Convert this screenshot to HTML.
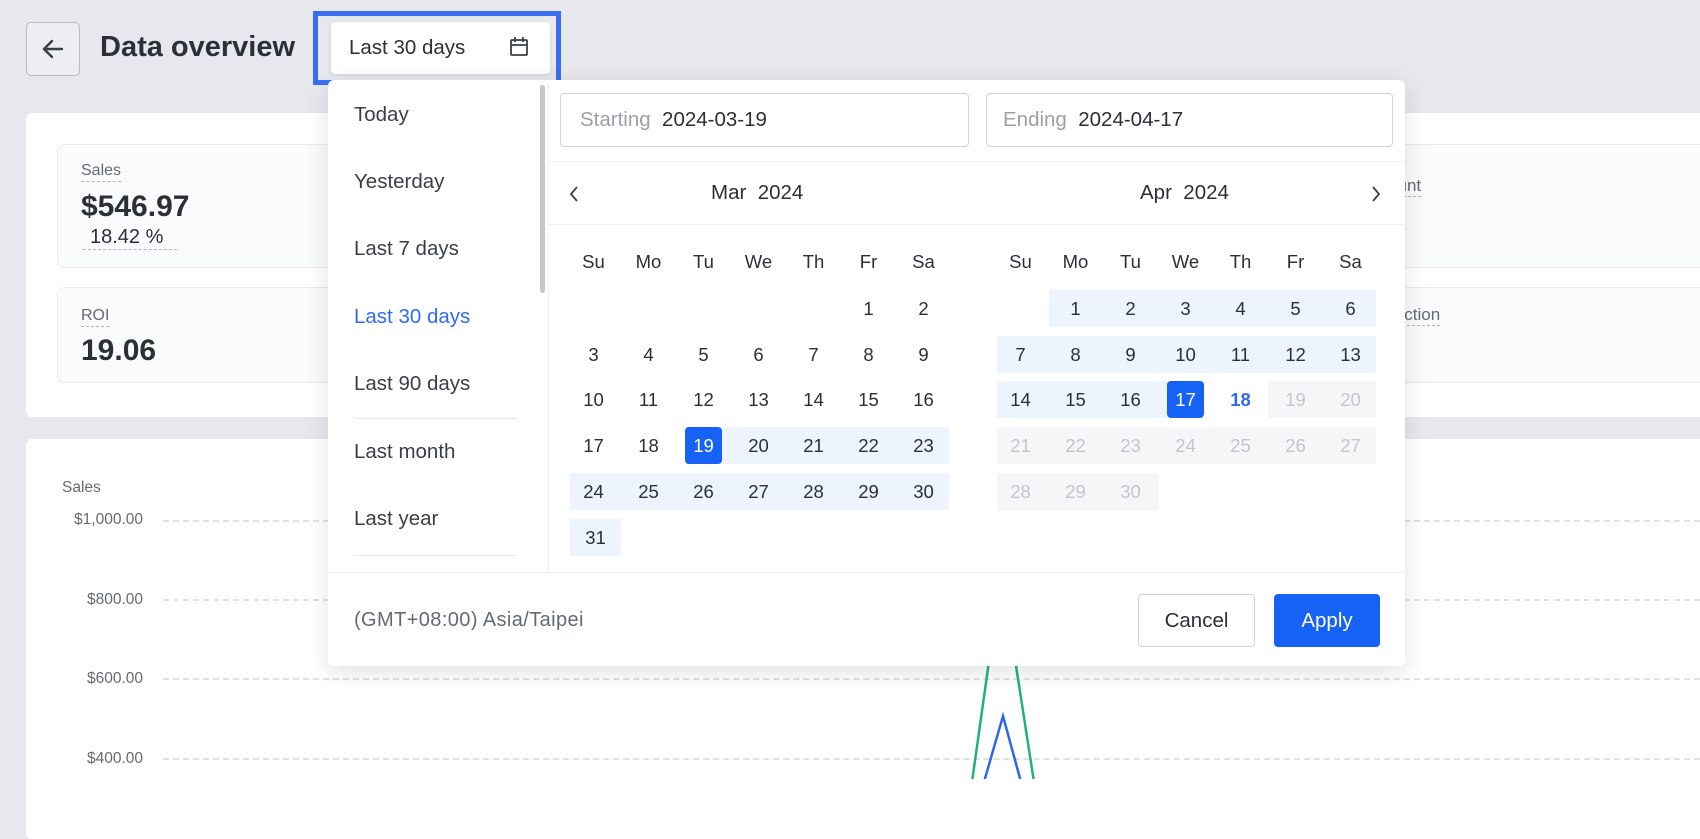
<!DOCTYPE html>
<html><head><meta charset="utf-8"><style>
*{box-sizing:border-box;margin:0;padding:0}
body{width:1700px;height:779px;overflow:hidden;background:#e6e8ed;font-family:"Liberation Sans",sans-serif;color:#2b2f36;position:relative}
.a{position:absolute}
.card{background:#fff;border-radius:6px}
.mc{background:#fafbfc;border:1px solid #e8eaee;border-radius:8px}
.lbl{font-size:16px;color:#646a73;border-bottom:1px dashed #b0b5bd;line-height:20px}
.row{position:absolute;display:flex;height:37px}
.row span{width:55px;text-align:center;line-height:37px;font-size:18.5px;color:#2b2f36}
.bg{background:#edf4fe}
.dis{background:#f5f6f8}
.dis span,.row span.d{color:#c2c6cc}
.sel{background:#1662f5;color:#fff!important;border-radius:4px;width:37px!important;margin:0 9px}
.li{position:absolute;left:354px;font-size:20.5px;color:#3a3f47}
.yl{position:absolute;right:1557px;font-size:15.5px;color:#646a73;text-align:right;white-space:nowrap}
.gl{position:absolute;left:163px;right:0;border-top:2px dashed #dfe1e5}
</style></head><body>
<div class="a" style="left:26px;top:22px;width:54px;height:54px;border:1px solid #b8bcc4;border-radius:5px;background:#eceef2"></div>
<svg class="a" style="left:40px;top:36px" width="26" height="26" viewBox="0 0 26 26"><path d="M22 13H5M12 5l-8 8 8 8" stroke="#3a3f47" stroke-width="2.4" fill="none" stroke-linecap="round" stroke-linejoin="round"/></svg>
<div class="a" style="left:100px;top:31px;font-size:29px;font-weight:bold;color:#2b2f36">Data overview</div>
<div class="a" style="left:313px;top:11px;width:248px;height:74px;border:5px solid #3a6df0"></div>
<div class="a" style="left:331px;top:22px;width:219px;height:52px;background:#fff;border-radius:4px;box-shadow:0 1px 3px rgba(0,0,0,.1)"></div>
<div class="a" style="left:349px;top:36px;font-size:20.5px;color:#2b2f36">Last 30 days</div>
<svg class="a" style="left:509px;top:36px" width="20" height="22" viewBox="0 0 20 22"><rect x="2" y="4" width="16" height="15" rx="1" stroke="#3a3f47" stroke-width="1.8" fill="none"/><path d="M2 9h16M6 1v5M14 1v5" stroke="#3a3f47" stroke-width="1.8"/></svg>
<div class="a card" style="left:26px;top:113px;width:1700px;height:304px"></div>
<div class="a mc" style="left:57px;top:144px;width:400px;height:124px"></div>
<div class="a mc" style="left:57px;top:287px;width:400px;height:96px"></div>
<div class="a mc" style="left:1100px;top:144px;width:700px;height:124px"></div>
<div class="a mc" style="left:1100px;top:287px;width:700px;height:96px"></div>
<div class="a lbl" style="left:81px;top:161px">Sales</div>
<div class="a" style="left:81px;top:190px;font-size:30px;font-weight:bold">$546.97</div>
<div class="a" style="left:83px;top:225px;font-size:20px;border-bottom:1px dashed #b0b5bd;line-height:24px;padding:0 14px 0 7px">18.42 %</div>
<div class="a lbl" style="left:81px;top:306px">ROI</div>
<div class="a" style="left:81px;top:334px;font-size:30px;font-weight:bold">19.06</div>
<div class="a lbl" style="left:1355px;top:176px;font-size:17px">Discount</div>
<div class="a lbl" style="left:1352px;top:305px;font-size:17px">Transaction</div>
<div class="a card" style="left:26px;top:439px;width:1700px;height:400px"></div>
<div class="a" style="left:62px;top:479px;font-size:15.5px;color:#646a73">Sales</div>
<div class="yl" style="top:511px">$1,000.00</div><div class="gl" style="top:520px"></div>
<div class="yl" style="top:591px">$800.00</div><div class="gl" style="top:599px"></div>
<div class="yl" style="top:670px">$600.00</div><div class="gl" style="top:678px"></div>
<div class="yl" style="top:750px">$400.00</div><div class="gl" style="top:758px"></div>
<svg class="a" style="left:0;top:0" width="1700" height="779"><path d="M972 782L992 640M1034 782L1012 640" stroke="#22b07d" stroke-width="2.5" fill="none"/><path d="M984 782L1003 716L1021 782" stroke="#2f66f0" stroke-width="2.5" fill="none"/></svg>
<div class="a" style="left:328px;top:80px;width:1077px;height:586px;background:#fff;border-radius:6px;box-shadow:0 6px 24px rgba(0,0,0,.12)"></div>
<div class="a" style="left:328px;top:85px;width:220px;height:10px;background:#fff"></div>
<div class="a" style="left:548px;top:85px;width:1px;height:487px;background:#eef0f3"></div>
<div class="a" style="left:540px;top:85px;width:5px;height:208px;background:#c4c7cc;border-radius:3px"></div>
<div class="li" style="top:103px">Today</div>
<div class="li" style="top:170px">Yesterday</div>
<div class="li" style="top:237px">Last 7 days</div>
<div class="li" style="top:305px;color:#2f6bf2">Last 30 days</div>
<div class="li" style="top:372px">Last 90 days</div>
<div class="a" style="left:354px;top:418px;width:162px;height:1px;background:#e6e8eb"></div>
<div class="li" style="top:440px">Last month</div>
<div class="li" style="top:507px">Last year</div>
<div class="a" style="left:354px;top:555px;width:162px;height:1px;background:#e6e8eb"></div>
<div class="a" style="left:560px;top:93px;width:409px;height:54px;border:1px solid #d0d3d9;border-radius:4px"></div>
<div class="a" style="left:580px;top:108px;font-size:20.5px;color:#9aa0a8">Starting&nbsp; <span style="color:#2b2f36">2024-03-19</span></div>
<div class="a" style="left:986px;top:93px;width:407px;height:54px;border:1px solid #d0d3d9;border-radius:4px"></div>
<div class="a" style="left:1003px;top:108px;font-size:20.5px;color:#9aa0a8">Ending&nbsp; <span style="color:#2b2f36">2024-04-17</span></div>
<div class="a" style="left:548px;top:161px;width:857px;height:1px;background:#eef0f3"></div>
<div class="a" style="left:548px;top:224px;width:857px;height:1px;background:#eef0f3"></div>
<svg class="a" style="left:568px;top:185px" width="12" height="18"><path d="M9 2L3 9l6 7" stroke="#3a3f47" stroke-width="1.8" fill="none"/></svg>
<svg class="a" style="left:1370px;top:185px" width="12" height="18"><path d="M3 2l6 7-6 7" stroke="#3a3f47" stroke-width="1.8" fill="none"/></svg>
<div class="a" style="left:711px;top:181px;font-size:20.5px">Mar&nbsp; 2024</div>
<div class="a" style="left:1140px;top:181px;font-size:20.5px">Apr&nbsp; 2024</div>
<div class="row" style="left:566px;top:243px"><span>Su</span><span>Mo</span><span>Tu</span><span>We</span><span>Th</span><span>Fr</span><span>Sa</span></div>
<div class="row" style="left:993px;top:243px"><span>Su</span><span>Mo</span><span>Tu</span><span>We</span><span>Th</span><span>Fr</span><span>Sa</span></div>
<div class="row" style="left:566px;top:290px"><span></span><span></span><span></span><span></span><span></span><span>1</span><span>2</span></div>
<div class="row" style="left:566px;top:336px"><span>3</span><span>4</span><span>5</span><span>6</span><span>7</span><span>8</span><span>9</span></div>
<div class="row" style="left:566px;top:381px"><span>10</span><span>11</span><span>12</span><span>13</span><span>14</span><span>15</span><span>16</span></div>
<div class="a bg" style="left:685px;top:427px;width:264px;height:37px"></div>
<div class="row" style="left:566px;top:427px"><span>17</span><span>18</span><span class="sel">19</span><span>20</span><span>21</span><span>22</span><span>23</span></div>
<div class="a bg" style="left:570px;top:473px;width:379px;height:37px"></div>
<div class="row" style="left:566px;top:473px"><span>24</span><span>25</span><span>26</span><span>27</span><span>28</span><span>29</span><span>30</span></div>
<div class="row" style="left:566px;top:519px"><span class="bg" style="width:51px;margin-left:4px">31</span></div>
<div class="a bg" style="left:1049px;top:290px;width:327px;height:37px"></div>
<div class="row" style="left:993px;top:290px"><span></span><span>1</span><span>2</span><span>3</span><span>4</span><span>5</span><span>6</span></div>
<div class="a bg" style="left:997px;top:336px;width:379px;height:37px"></div>
<div class="row" style="left:993px;top:336px"><span>7</span><span>8</span><span>9</span><span>10</span><span>11</span><span>12</span><span>13</span></div>
<div class="a bg" style="left:997px;top:381px;width:171px;height:37px"></div>
<div class="a dis" style="left:1268px;top:381px;width:108px;height:37px"></div>
<div class="row" style="left:993px;top:381px"><span>14</span><span>15</span><span>16</span><span class="sel">17</span><span style="color:#2f6bf2;font-weight:bold">18</span><span class="d">19</span><span class="d">20</span></div>
<div class="a dis" style="left:997px;top:427px;width:379px;height:37px"></div>
<div class="row" style="left:993px;top:427px"><span class="d">21</span><span class="d">22</span><span class="d">23</span><span class="d">24</span><span class="d">25</span><span class="d">26</span><span class="d">27</span></div>
<div class="a dis" style="left:997px;top:473px;width:162px;height:37px"></div>
<div class="row" style="left:993px;top:473px"><span class="d">28</span><span class="d">29</span><span class="d">30</span></div>
<div class="a" style="left:328px;top:572px;width:1077px;height:1px;background:#eef0f3"></div>
<div class="a" style="left:354px;top:609px;font-size:20px;color:#646a73;letter-spacing:.4px">(GMT+08:00) Asia/Taipei</div>
<div class="a" style="left:1138px;top:594px;width:117px;height:53px;border:1px solid #cfd2d8;border-radius:4px;text-align:center;line-height:51px;font-size:20.5px">Cancel</div>
<div class="a" style="left:1274px;top:594px;width:106px;height:53px;background:#1662f5;border-radius:4px;text-align:center;line-height:53px;font-size:20.5px;color:#fff">Apply</div>
</body></html>
